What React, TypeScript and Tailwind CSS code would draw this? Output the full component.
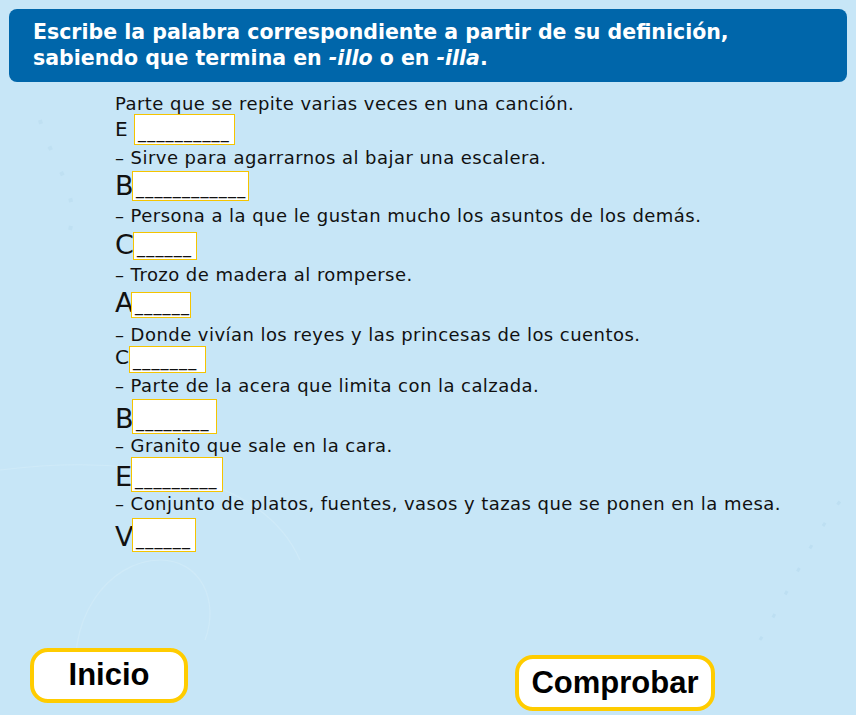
const items = [
  { def: "Parte que se repite varias veces en una canción.", dm: 0, letter: "E", big: false, lw: 19, bw: 101, bh: 31, rm: 0, n: 10 },
  { def: "– Sirve para agarrarnos al bajar una escalera.", dm: 3, letter: "B", big: true, lw: 17, bw: 117, bh: 30, rm: 3, n: 12 },
  { def: "– Persona a la que le gustan mucho los asuntos de los demás.", dm: 5, letter: "C", big: true, lw: 18, bw: 64, bh: 28, rm: 5, n: 6 },
  { def: "– Trozo de madera al romperse.", dm: 5, letter: "A", big: true, lw: 16, bw: 60, bh: 26, rm: 4, n: 6 },
  { def: "– Donde vivían los reyes y las princesas de los cuentos.", dm: 7, letter: "C", big: false, lw: 14, bw: 77, bh: 27, rm: 1, n: 7 },
  { def: "– Parte de la acera que limita con la calzada.", dm: 3, letter: "B", big: true, lw: 17, bw: 85, bh: 35, rm: 3, n: 8 },
  { def: "– Granito que sale en la cara.", dm: 2, letter: "E", big: true, lw: 16, bw: 92, bh: 35, rm: 1, n: 9 },
  { def: "– Conjunto de platos, fuentes, vasos y tazas que se ponen en la mesa.", dm: 2, letter: "V", big: true, lw: 17, bw: 64, bh: 34, rm: 4, n: 6 },
];

const App = () => {
  return (
    <div className="relative w-[856px] h-[715px] overflow-hidden bg-[#c7e6f7] font-['DejaVu_Sans',sans-serif] text-[#111]">
      {/* faint background swirls */}
      <svg className="absolute left-0 top-0" width="856" height="715" viewBox="0 0 856 715" fill="none">
        <path d="M80 700 C 60 620, 110 560, 160 560 C 200 560, 220 600, 205 640" stroke="#cfeaf8" strokeWidth="1.2" />
        <path d="M0 470 C 120 455, 260 470, 300 560" stroke="#cfeaf8" strokeWidth="1.2" />
        <path d="M760 640 C 790 590, 820 520, 850 490" stroke="#bddff2" strokeWidth="3" strokeDasharray="4 22" />
        <path d="M40 120 C 50 160, 80 190, 70 230" stroke="#bfe0f2" strokeWidth="4" strokeDasharray="4 24" />
      </svg>

      <div className="relative px-[9px] pt-[9px]">
        <div className="h-[73px] rounded-[8px] bg-[#0066aa] pl-[24px] pt-[10px] text-[20.5px] font-bold leading-[26px] text-white">
          <p>Escribe la palabra correspondiente a partir de su definición,</p>
          <p>
            sabiendo que termina en <i>-illo</i> o en <i>-illa</i>.
          </p>
        </div>
      </div>

      <div className="relative ml-[115px] mt-[12px] flex flex-col">
        {items.map((it, i) => (
          <div key={i} className="flex flex-col">
            <p
              className="h-[20px] text-[18px] leading-[20px] tracking-[0.45px] whitespace-nowrap"
              style={{ marginTop: it.dm }}
            >
              {it.def}
            </p>
            <div className="flex items-end" style={{ marginTop: it.rm }}>
              <span
                className={
                  it.big
                    ? "pb-[2px] text-[27px] leading-none"
                    : "pb-[6px] text-[20px] leading-none"
                }
                style={{ width: it.lw }}
              >
                {it.letter}
              </span>
              <div
                className="flex items-end overflow-hidden whitespace-nowrap border border-[#f5c400] bg-white px-[3px] pb-[3px] text-[16px] leading-[16px] tracking-[1.2px]"
                style={{ width: it.bw, height: it.bh }}
              >
                {"_".repeat(it.n)}
              </div>
            </div>
          </div>
        ))}
      </div>

      <div className="absolute left-0 top-[648px] flex w-full font-['Liberation_Sans',sans-serif] font-bold text-black">
        <div className="ml-[30px] flex h-[55px] w-[158px] items-center justify-center rounded-[18px] border-[4px] border-[#ffcc00] bg-white text-[31px]">
          Inicio
        </div>
        <div className="ml-[327px] mt-[7px] flex h-[56px] w-[200px] items-center justify-center rounded-[18px] border-[4px] border-[#ffcc00] bg-white text-[31px]">
          Comprobar
        </div>
      </div>
    </div>
  );
};

export default App;
